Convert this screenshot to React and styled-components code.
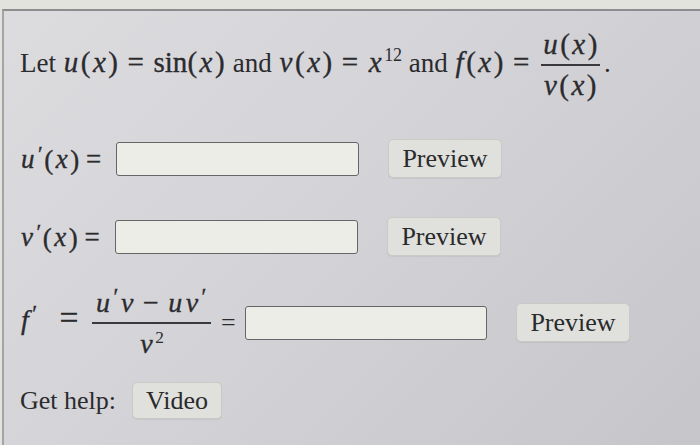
import React from 'react';
import styled, { createGlobalStyle } from 'styled-components';

const GlobalStyle = createGlobalStyle`
  html, body { margin: 0; padding: 0; }
  body {
    width: 700px;
    height: 445px;
    overflow: hidden;
    background: #e3e3de;
    font-family: "Liberation Serif", "Times New Roman", serif;
    color: #2b2b2e;
  }
`;

const Page = styled.div`
  height: 445px;
  box-sizing: border-box;
  padding-top: 9px;
  display: flex;
  flex-direction: column;
`;

const Panel = styled.section`
  flex: 1;
  margin-left: 2px;
  border-top: 2px solid #8c8c91;
  border-left: 2px solid #a4a4a8;
  background: linear-gradient(135deg, #dcdcdf 0%, #d4d4d8 45%, #c6c6ca 100%);
  display: flex;
  flex-direction: column;
  gap: 39px;
  padding: 19px 0 0 16px;
`;

const Statement = styled.div`
  height: 70px;
  display: flex;
  align-items: center;
  font-size: 27px;
  white-space: nowrap;
`;

const Row = styled.div`
  height: ${p => p.$h}px;
  margin-top: ${p => p.$mt || 0}px;
  display: flex;
  align-items: center;
  font-size: 26px;
  white-space: nowrap;
`;

const Label = styled.div`
  width: ${p => p.$w}px;
  flex: none;
  display: flex;
  align-items: center;
`;

const MathRun = styled.span`
  font-family: "Liberation Serif", "Times New Roman", serif;
  font-size: ${p => p.$size || 29}px;
  letter-spacing: 1.5px;
  white-space: nowrap;
  -webkit-text-stroke: 0.35px #2b2b2e;
`;

const Fn = styled.span`
  letter-spacing: 0;
`;

const Mi = styled.i`
  font-style: italic;
  padding: 0 1px;
`;

const Mo = styled.span`
  font-size: ${p => p.$scale || 1}em;
  margin: 0 ${p => p.$r ?? p.$sp ?? 0.28}em 0 ${p => p.$l ?? p.$sp ?? 0.28}em;
`;

const Prime = styled.span`
  font-style: normal;
  font-size: 0.8em;
  vertical-align: 0.35em;
  margin-left: 1px;
`;

const Sup = styled.span`
  font-size: 0.62em;
  vertical-align: 0.6em;
  letter-spacing: 0;
  -webkit-text-stroke: 0;
`;

const Frac = styled.span`
  display: inline-flex;
  flex-direction: column;
  align-items: center;
  vertical-align: middle;
  margin: 0 ${p => p.$mr ?? 4}px 0 ${p => p.$ml ?? 4}px;
`;

const Num = styled.span`
  padding: 0 ${p => p.$pad ?? 2}px 3px;
  line-height: 1.1;
`;

const Den = styled.span`
  align-self: stretch;
  text-align: center;
  border-top: 2px solid #3a3a3d;
  padding: 4px 2px 0;
  line-height: 1.1;
`;

const AnswerBox = styled.input`
  width: ${p => p.$w || 243}px;
  height: 34px;
  box-sizing: border-box;
  flex: none;
  background: #edede7;
  border: 1.5px solid #656567;
  border-radius: 3px;
  outline: none;
  padding: 0;
`;

const Btn = styled.button`
  height: ${p => p.$h || 39}px;
  width: ${p => p.$w || 114}px;
  margin-left: ${p => p.$ml || 0}px;
  flex: none;
  box-sizing: border-box;
  background: #e0e0dc;
  border: 1px solid #c9c9c5;
  border-radius: 5px;
  box-shadow: 0 1px 1px rgba(0,0,0,0.06);
  font-family: "Liberation Serif", "Times New Roman", serif;
  font-size: 26px;
  color: #2a2a2c;
  padding: 0;
`;

const Text = styled.span``;

export default function App() {
  return (
    <>
      <GlobalStyle />
      <Page>
        <Panel>
          <Statement>
            <span>
              <Text>Let </Text>
              <MathRun>
                <Mi>u</Mi>(<Mi>x</Mi>)<Mo>=</Mo><Fn>sin</Fn>(<Mi>x</Mi>)
              </MathRun>
              <Text> and </Text>
              <MathRun>
                <Mi>v</Mi>(<Mi>x</Mi>)<Mo>=</Mo><Mi>x</Mi><Sup>12</Sup>
              </MathRun>
              <Text> and </Text>
              <MathRun>
                <Mi>f</Mi>(<Mi>x</Mi>)<Mo>=</Mo>
                <Frac $ml={2}>
                  <Num $pad={1}><Mi>u</Mi>(<Mi>x</Mi>)</Num>
                  <Den><Mi>v</Mi>(<Mi>x</Mi>)</Den>
                </Frac>
              </MathRun>
              <Text>.</Text>
            </span>
          </Statement>

          <Row $h={39}>
            <Label $w={96}>
              <MathRun $size={27}>
                <Mi>u</Mi><Prime>′</Prime>(<Mi>x</Mi>)<Mo $sp={0.2}>=</Mo>
              </MathRun>
            </Label>
            <AnswerBox type="text" aria-label="u prime" />
            <Btn $ml={29}>Preview</Btn>
          </Row>

          <Row $h={39}>
            <Label $w={95}>
              <MathRun $size={27}>
                <Mi>v</Mi><Prime>′</Prime>(<Mi>x</Mi>)<Mo $sp={0.2}>=</Mo>
              </MathRun>
            </Label>
            <AnswerBox type="text" aria-label="v prime" />
            <Btn $ml={29}>Preview</Btn>
          </Row>

          <Row $h={55}>
            <Label $w={225}>
              <MathRun $size={28}>
                <Mi>f</Mi><Prime>′</Prime><Mo $scale={1.2} $l={0.62} $r={0.3}>=</Mo>
                <Frac $ml={2} $mr={10}>
                  <Num $pad={3}>
                    <Mi>u</Mi><Prime>′</Prime><Mi>v</Mi><Mo $sp={0.25}>−</Mo><Mi>u</Mi><Mi>v</Mi><Prime>′</Prime>
                  </Num>
                  <Den><Mi>v</Mi><Sup>2</Sup></Den>
                </Frac>
              </MathRun>
              <Text>=</Text>
            </Label>
            <AnswerBox type="text" aria-label="f prime" $w={242} />
            <Btn $ml={29}>Preview</Btn>
          </Row>

          <Row $h={37} $mt={-7}>
            <Label $w={112}>
              <Text>Get help:</Text>
            </Label>
            <Btn $w={90} $h={37}>Video</Btn>
          </Row>
        </Panel>
      </Page>
    </>
  );
}
